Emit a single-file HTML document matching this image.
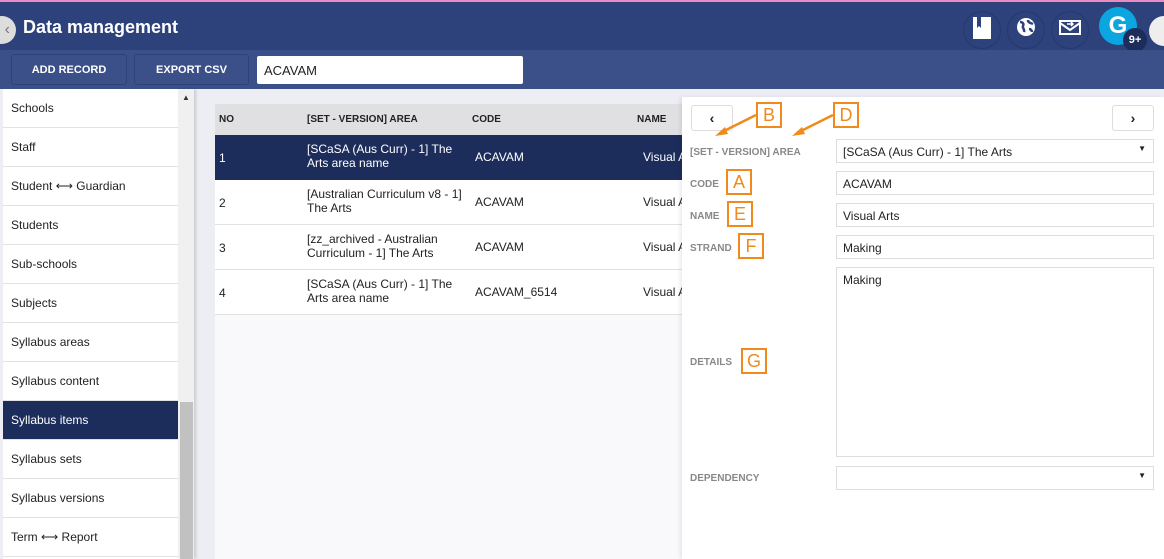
<!DOCTYPE html>
<html><head><meta charset="utf-8"><style>
*{box-sizing:border-box;margin:0;padding:0}
body{width:1164px;height:559px;overflow:hidden;font-family:"Liberation Sans",sans-serif;background:#eceef3;position:relative;font-size:12px;color:#222}
.top{position:absolute;left:0;top:0;width:1164px;height:50px;background:#2d417b;border-top:2px solid #e78bc0}
.title{position:absolute;left:23px;top:15px;color:#fff;font-weight:bold;font-size:18px}
.tb{position:absolute;left:0;top:50px;width:1164px;height:39px;background:#3b5089}
.btn{position:absolute;top:4px;height:31px;border:1px solid #2d417b;border-radius:3px;color:#fff;font-weight:bold;font-size:11px;text-align:center;line-height:30px}
.search{position:absolute;left:257px;top:6px;width:266px;height:28px;background:#fff;border-radius:2px;font-size:13px;padding:7px 7px}
.side{position:absolute;left:3px;top:89px;width:175px;height:470px;background:#fff}
.side div{height:39px;border-bottom:1px solid #e2e2e2;padding-left:8px;line-height:39px;font-size:12px}
.side .sel{background:#1c2d5b;color:#fff}
.sb{position:absolute;left:178px;top:89px;width:16px;height:470px;background:#f0f0f0;box-shadow:2px 0 3px rgba(0,0,0,.15)}
.thumb{position:absolute;left:180px;top:402px;width:13px;height:157px;background:#c1c1c1}
.tbl{position:absolute;left:215px;top:104px;width:467px;height:455px;background:#f9f9fb;overflow:hidden}
.row{position:absolute;left:0;width:467px;height:45px;border-bottom:1px solid #e2e2e2;background:#fff}
.row span{position:absolute;font-size:12px;line-height:14px;white-space:nowrap}
.panel{position:absolute;left:682px;top:97px;width:482px;height:462px;background:#fff}
.lbl{position:absolute;left:8px;color:#888;font-size:10px;font-weight:bold}
.inp{position:absolute;left:154px;width:318px;height:24px;border:1px solid #ddd;font-size:12px;padding:5px 6px}
.tag{position:absolute;border:2px solid #f08a1c;color:#f08a1c;font-size:18px;text-align:center;line-height:22px;width:26px;height:26px;background:#fff}
.circ{position:absolute;top:9px;width:38px;height:38px;border-radius:50%;border:1px solid #253870}
</style></head><body>
<div class="top">
<div style="position:absolute;left:-12px;top:14px;width:28px;height:28px;border-radius:50%;background:#ddd;color:#777;font-size:16px;line-height:28px;text-align:right;padding-right:6px">‹</div>
<div class="title">Data management</div>
<div class="circ" style="left:963px"></div><div class="circ" style="left:1007px"></div><div class="circ" style="left:1051px"></div>
<svg style="position:absolute;left:973px;top:15px" width="18" height="22"><path d="M0 0h18v22H0z M4 0v11l2-2 2 2V0" fill="#fff" fill-rule="evenodd"/></svg>
<svg style="position:absolute;left:1016px;top:15px" width="20" height="20"><circle cx="10" cy="10" r="9" fill="#fff"/><path d="M4 5c3 0 4 2 3 4s2 3 1 6M12 3c0 3 3 3 5 4M13 12c2 0 3 2 3 3" stroke="#2d417b" stroke-width="2.5" fill="none"/></svg>
<svg style="position:absolute;left:1059px;top:16px" width="22" height="18"><path d="M1 5l10 7 10-7M1 3h20v13H1z" stroke="#fff" stroke-width="2" fill="none"/><path d="M8 6h6M12 4l2 2-2 2" stroke="#fff" stroke-width="1.5" fill="none"/></svg>
<div style="position:absolute;left:1099px;top:5px;width:38px;height:38px;border-radius:50%;background:#0ba5df;color:#fff;font-weight:bold;font-size:24px;text-align:center;line-height:38px">G</div>
<div style="position:absolute;left:1123px;top:26px;width:24px;height:24px;border-radius:50%;background:#1c2d5b;color:#fff;font-weight:bold;font-size:11px;text-align:center;line-height:24px">9+</div>
<div style="position:absolute;left:1149px;top:14px;width:30px;height:30px;border-radius:50%;background:#eee"></div>
</div>
<div class="tb">
<div class="btn" style="left:11px;width:116px">ADD RECORD</div>
<div class="btn" style="left:134px;width:115px">EXPORT CSV</div>
<div class="search">ACAVAM</div>
</div>
<div class="side">
<div>Schools</div><div>Staff</div><div>Student ⟷ Guardian</div><div>Students</div><div>Sub-schools</div><div>Subjects</div><div>Syllabus areas</div><div>Syllabus content</div><div class="sel">Syllabus items</div><div>Syllabus sets</div><div>Syllabus versions</div><div>Term ⟷ Report</div>
</div>
<div class="sb"></div><div class="thumb"></div>
<div style="position:absolute;left:182px;top:93px;font-size:8px;color:#333">▲</div>
<div class="tbl">
<div style="position:absolute;left:0;top:0;width:467px;height:31px;background:#e0e0e2;font-weight:bold;font-size:10px">
<span style="position:absolute;left:4px;top:10px">NO</span><span style="position:absolute;left:92px;top:10px">[SET - VERSION] AREA</span><span style="position:absolute;left:257px;top:10px">CODE</span><span style="position:absolute;left:422px;top:10px">NAME</span></div>
<div class="row" style="top:31px;background:#1c2d5b;color:#fff;border:none"><span style="left:4px;top:16px">1</span><span style="left:92px;top:7px">[SCaSA (Aus Curr) - 1] The<br>Arts area name</span><span style="left:260px;top:15px">ACAVAM</span><span style="left:428px;top:15px">Visual Arts</span></div>
<div class="row" style="top:76px"><span style="left:4px;top:16px">2</span><span style="left:92px;top:7px">[Australian Curriculum v8 - 1]<br>The Arts</span><span style="left:260px;top:15px">ACAVAM</span><span style="left:428px;top:15px">Visual Arts</span></div>
<div class="row" style="top:121px"><span style="left:4px;top:16px">3</span><span style="left:92px;top:7px">[zz_archived - Australian<br>Curriculum - 1] The Arts</span><span style="left:260px;top:15px">ACAVAM</span><span style="left:428px;top:15px">Visual Arts</span></div>
<div class="row" style="top:166px"><span style="left:4px;top:16px">4</span><span style="left:92px;top:7px">[SCaSA (Aus Curr) - 1] The<br>Arts area name</span><span style="left:260px;top:15px">ACAVAM_6514</span><span style="left:428px;top:15px">Visual Arts</span></div>
</div>
<div class="panel" style="box-shadow:-2px 0 4px rgba(0,0,0,.08)">
<div style="position:absolute;left:9px;top:8px;width:42px;height:26px;border:1px solid #ddd;border-radius:3px;text-align:center;line-height:24px;font-size:14px;font-weight:bold">‹</div>
<div style="position:absolute;left:430px;top:8px;width:42px;height:26px;border:1px solid #ddd;border-radius:3px;text-align:center;line-height:24px;font-size:14px;font-weight:bold">›</div>
<div class="lbl" style="top:50px">[SET - VERSION] AREA</div>
<div class="inp" style="top:42px">[SCaSA (Aus Curr) - 1] The Arts<span style="position:absolute;right:7px;top:4px;font-size:8px">▼</span></div>
<div class="lbl" style="top:82px">CODE</div><div class="inp" style="top:74px">ACAVAM</div>
<div class="lbl" style="top:114px">NAME</div><div class="inp" style="top:106px">Visual Arts</div>
<div class="lbl" style="top:146px">STRAND</div><div class="inp" style="top:138px">Making</div>
<div class="inp" style="top:170px;height:190px">Making</div>
<div class="lbl" style="top:260px">DETAILS</div>
<div class="lbl" style="top:376px">DEPENDENCY</div>
<div class="inp" style="top:369px"><span style="position:absolute;right:7px;top:4px;font-size:8px">▼</span></div>
<div class="tag" style="left:74px;top:5px">B</div>
<div class="tag" style="left:151px;top:5px">D</div>
<div class="tag" style="left:44px;top:72px">A</div>
<div class="tag" style="left:45px;top:104px">E</div>
<div class="tag" style="left:56px;top:136px">F</div>
<div class="tag" style="left:59px;top:251px">G</div>
<svg style="position:absolute;left:0;top:0" width="200" height="60"><g stroke="#f08a1c" stroke-width="2.5" fill="#f08a1c"><line x1="74" y1="18" x2="38" y2="36"/><line x1="151" y1="18" x2="115" y2="36"/></g><path d="M33 39l10-9 3 7z M110 39l10-9 3 7z" fill="#f08a1c"/></svg>
</div>
</body></html>
